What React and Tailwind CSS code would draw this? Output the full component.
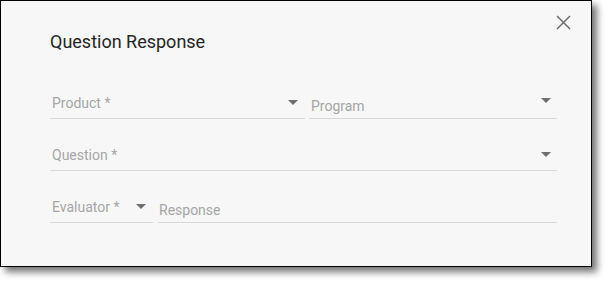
import React from "react";

function Arrow({ className }) {
  return (
    <svg width="10" height="5" viewBox="0 0 10 5" className={className}>
      <path d="M0 0 L10 0 L5 5 Z" fill="#6f6f6f" />
    </svg>
  );
}

export default function App() {
  return (
    <div className="w-[607px] h-[282px] bg-white font-['Roboto',sans-serif]">
      <div className="relative w-[592px] h-[267px] border border-black bg-[#f7f7f7] shadow-[5px_5px_7px_rgba(0,0,0,0.55)] pl-[49px] pr-[33px] pt-[30px]">
        <h2 className="text-[18px] leading-[22px] text-[#262626]">Question Response</h2>

        {/* close */}
        <button className="absolute top-[14px] right-[20px] w-[15px] h-[15px]">
          <svg width="15" height="15" viewBox="0 0 15 15">
            <path d="M1 1 L14 14 M14 1 L1 14" stroke="#6e6e6e" strokeWidth="1.5" />
          </svg>
        </button>

        <div className="mt-[34px] flex gap-[4px]">
          <div className="flex h-[32px] w-[255px] justify-between border-b border-[#d9d9d9] pl-[2px] pr-[7px]">
            <span className="pt-[8px] text-[14px] leading-[16px] text-[#a6a6a6]">Product *</span>
            <Arrow className="mt-[13px]" />
          </div>
          <div className="flex h-[32px] w-[248px] justify-between border-b border-[#d9d9d9] pl-[2px] pr-[6px]">
            <span className="pt-[11px] text-[14px] leading-[16px] text-[#a6a6a6]">Program</span>
            <Arrow className="mt-[11px]" />
          </div>
        </div>

        <div className="mt-[20px] flex">
          <div className="flex h-[32px] w-[507px] justify-between border-b border-[#d9d9d9] pl-[2px] pr-[6px]">
            <span className="pt-[8px] text-[14px] leading-[16px] text-[#a6a6a6]">Question *</span>
            <Arrow className="mt-[13px]" />
          </div>
        </div>

        <div className="mt-[20px] flex gap-[5px]">
          <div className="flex h-[32px] w-[103px] justify-between border-b border-[#d9d9d9] pl-[2px] pr-[7px]">
            <span className="pt-[8px] text-[14px] leading-[16px] text-[#a6a6a6]">Evaluator *</span>
            <Arrow className="mt-[13px]" />
          </div>
          <div className="flex h-[32px] w-[399px] border-b border-[#d9d9d9] pl-[1px]">
            <span className="pt-[11px] text-[14px] leading-[16px] text-[#a6a6a6]">Response</span>
          </div>
        </div>
      </div>
    </div>
  );
}
